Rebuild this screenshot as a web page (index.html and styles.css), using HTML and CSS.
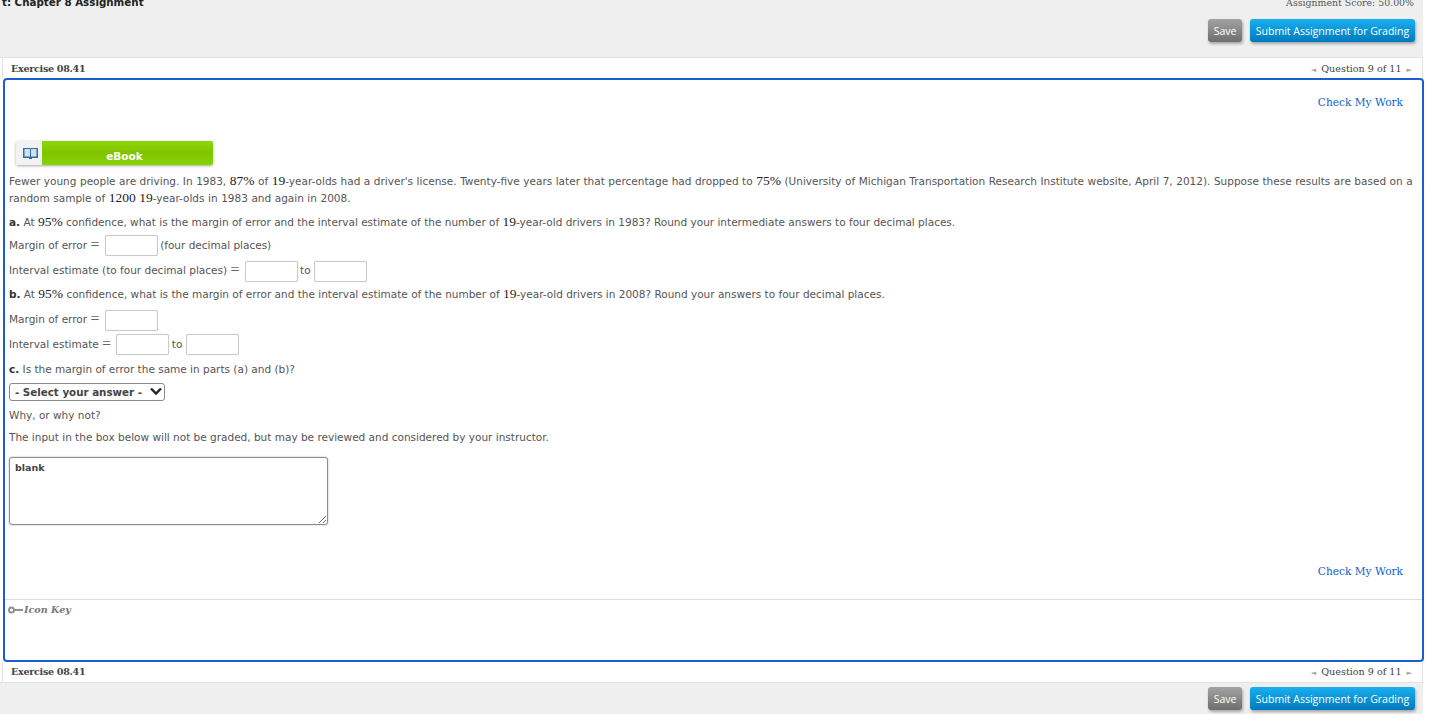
FILE: index.html
```html
<!DOCTYPE html>
<html lang="en">
<head>
    <meta charset="UTF-8">
    <title>Chapter 8 Assignment</title>
    <link rel="stylesheet" href="styles.css">
</head>
<body>
    <div class="top-bar">
        <div class="top-info">
            <span class="assignment-title">t: Chapter 8 Assignment</span>
            <span class="assignment-score">Assignment Score: 50.00%</span>
        </div>
        <div class="actions">
            <button class="btn btn-save">Save</button>
            <button class="btn btn-submit">Submit Assignment for Grading</button>
        </div>
    </div>

    <div class="exercise-bar">
        <span class="exercise-name">Exercise 08.41</span>
        <span class="pager"><span class="arrow">&#9668;</span> Question 9 of 11 <span class="arrow">&#9658;</span></span>
    </div>

    <div class="panel">
        <div class="check-row check-row-top"><a class="check-link">Check My Work</a></div>

        <div class="ebook">
            <span class="ebook-icon">
                <svg width="15" height="13" viewBox="0 0 15 13">
                    <path d="M0 1h7l.5.500L8 1h7v10H9v1H6v-1H0z" fill="#2f6fa5"/>
                    <path d="M1.500 2H7v7.500H1.500zM8 2h5.500v7.500H8z" fill="#cfe0ee"/>
                </svg>
            </span>
            <span class="ebook-label">eBook</span>
        </div>

        <div class="question">
            <p class="intro">Fewer young people are driving. In 1983, <span class="math">87%</span> of <span class="math">19</span>-year-olds had a driver's license. Twenty-five years later that percentage had dropped to <span class="math">75%</span> (University of Michigan Transportation Research Institute website, April 7, 2012). Suppose these results are based on a<br>random sample of <span class="math">1200</span> <span class="math">19</span>-year-olds in 1983 and again in 2008.</p>
            <p class="line line-a"><b>a.</b> At <span class="math">95%</span> confidence, what is the margin of error and the interval estimate of the number of <span class="math">19</span>-year-old drivers in 1983? Round your intermediate answers to four decimal places.</p>
            <p class="line line-tall">Margin of error <span class="eq">=</span> <input class="answer" type="text"> (four decimal places)</p>
            <p class="line line-short">Interval estimate (to four decimal places) <span class="eq">=</span> <input class="answer" type="text"> to <input class="answer" type="text"></p>
            <p class="line line-tall"><b>b.</b> At <span class="math">95%</span> confidence, what is the margin of error and the interval estimate of the number of <span class="math">19</span>-year-old drivers in 2008? Round your answers to four decimal places.</p>
            <p class="line">Margin of error <span class="eq">=</span> <input class="answer" type="text"></p>
            <p class="line line-tall">Interval estimate <span class="eq">=</span> <input class="answer" type="text"> to <input class="answer" type="text"></p>
            <p class="line line-tall"><b>c.</b> Is the margin of error the same in parts (a) and (b)?</p>
            <div class="select-box">
                <span>- Select your answer -</span>
                <svg width="14" height="9" viewBox="0 0 14 9"><path d="M2 1.500 7 6.500l5-5" fill="none" stroke="#222" stroke-width="2.400"/></svg>
            </div>
            <p class="line line-why">Why, or why not?</p>
            <p class="line line-note">The input in the box below will not be graded, but may be reviewed and considered by your instructor.</p>
            <textarea class="comment">blank</textarea>
        </div>

        <div class="check-row check-row-bottom"><a class="check-link">Check My Work</a></div>

        <div class="icon-key">
            <svg width="16" height="8" viewBox="0 0 16 8"><circle cx="3.500" cy="4" r="2.500" fill="none" stroke="#8f8f8f" stroke-width="2"/><path d="M6 4h9" stroke="#8f8f8f" stroke-width="2"/></svg>
            <span>Icon Key</span>
        </div>
    </div>

    <div class="exercise-bar exercise-bar-bottom">
        <span class="exercise-name">Exercise 08.41</span>
        <span class="pager"><span class="arrow">&#9668;</span> Question 9 of 11 <span class="arrow">&#9658;</span></span>
    </div>

    <div class="bottom-bar">
        <div class="actions">
            <button class="btn btn-save">Save</button>
            <button class="btn btn-submit">Submit Assignment for Grading</button>
        </div>
    </div>
</body>
</html>
```

FILE: styles.css
```css
html, body {
    height: 714px;
    overflow: hidden;
}

body {
    margin: 0;
    background-color: #fff;
    font-family: "DejaVu Sans", Verdana, sans-serif;
    font-size: 10.500px;
    color: #555;
}

.top-bar {
    width: 1423px;
    height: 58px;
    box-sizing: border-box;
    background-color: #efefef;
    border-bottom: 1px solid #e2e2e2;
    overflow: hidden;
}

.top-info {
    display: flex;
    justify-content: space-between;
    height: 14px;
    margin-top: -5px;
    margin-bottom: 10px;
    padding-right: 9px;
}

.assignment-title {
    margin-left: 2px;
    font-weight: bold;
    font-size: 10.300px;
    color: #222;
    line-height: 14px;
}

.assignment-score {
    margin-top: 1px;
    font-family: "DejaVu Serif", serif;
    font-size: 9.400px;
    line-height: 14px;
}

.actions {
    display: flex;
    justify-content: flex-end;
    gap: 8px;
    padding-right: 8px;
}

.btn {
    height: 23px;
    border: none;
    border-radius: 3px;
    color: #fff;
    font-family: "Open Sans", sans-serif;
    font-size: 10.500px;
    font-weight: 500;
    padding: 0;
    box-shadow: 1px 2px 3px rgba(0, 0, 0, 0.3);
}

.btn-save {
    width: 34px;
    background: linear-gradient(#a3a3a3, #6e6e6e);
}

.btn-submit {
    width: 165px;
    background: linear-gradient(#19b0f0, #0079bd);
}

.exercise-bar {
    display: flex;
    justify-content: space-between;
    align-items: center;
    width: 1421px;
    height: 20px;
    margin-left: 2px;
    box-sizing: border-box;
    padding: 0 8px 0 8px;
    border-left: 1px solid #e2e2e2;
    border-right: 1px solid #e2e2e2;
    font-family: "DejaVu Serif", serif;
    font-size: 9.600px;
    color: #444;
    background-color: #fff;
}

.exercise-bar-bottom {
    padding-bottom: 2px;
}

.exercise-name {
    font-weight: bold;
    letter-spacing: -0.300px;
}

.pager .arrow {
    font-size: 7px;
    color: #aaa;
    margin: 0 2px;
}

.panel {
    width: 1421px;
    height: 584px;
    margin-left: 3px;
    box-sizing: border-box;
    border: 2px solid #1a5fd0;
    border-radius: 4px;
    background-color: #fff;
}

.check-row {
    display: flex;
    justify-content: flex-end;
    padding-right: 19px;
}

.check-row-top {
    padding-top: 14px;
}

.check-row-bottom {
    margin-top: 38px;
}

.check-link {
    font-family: "DejaVu Serif", serif;
    font-size: 10.600px;
    line-height: 16px;
    color: #0f62c9;
}

.ebook {
    display: flex;
    width: 197px;
    height: 24px;
    margin: 31px 0 0 11px;
    box-shadow: 0 1px 3px rgba(0, 0, 0, 0.35);
    border-radius: 2px;
}

.ebook-icon {
    display: flex;
    align-items: center;
    justify-content: center;
    width: 26px;
    padding-left: 3px;
    box-sizing: border-box;
    background-color: #f2f2f2;
}

.ebook-label {
    flex: 1;
    padding-right: 6px;
    background: linear-gradient(#8fd606, #7fc400 50%, #8ad200);
    border-radius: 0 2px 2px 0;
    color: #fff;
    font-weight: bold;
    font-size: 10.500px;
    line-height: 31px;
    overflow: hidden;
    text-align: center;
}

.question {
    padding: 0 4px;
}

.question p {
    margin: 0;
}

.intro {
    margin-top: 8px !important;
    line-height: 17px;
    word-spacing: 0.200px;
}

.line {
    height: 24.500px;
    line-height: 24.500px;
    white-space: nowrap;
}

.line b {
    color: #333;
}

.line-a {
    height: 22.500px;
    margin-top: 3px !important;
}

.line-tall {
    height: 25.500px;
}

.line-short {
    height: 23.500px;
}

.line-why {
    height: 22px;
    margin-top: 3px !important;
    line-height: 23px;
}

.line-note {
    height: 22px;
    line-height: 22px;
}

.math {
    font-family: "Liberation Serif", serif;
    font-size: 13.500px;
    line-height: 1;
    color: #222;
}

.eq {
    margin-right: 2px;
    font-family: "Liberation Serif", serif;
    font-size: 16px;
    line-height: 1;
    vertical-align: -1px;
    color: #666;
}

.answer {
    width: 53px;
    height: 21px;
    box-sizing: border-box;
    margin: 0 -1px 0 0;
    padding: 0;
    vertical-align: middle;
    border: 1px solid #c9c9c9;
    border-radius: 2px;
    background-color: #fff;
    box-shadow: 0 0 1px rgba(0, 0, 0, 0.15);
}

.select-box {
    display: flex;
    align-items: center;
    justify-content: space-between;
    width: 156px;
    height: 18px;
    box-sizing: border-box;
    padding: 0 1px 0 5px;
    border: 1px solid #8a8a8a;
    border-radius: 3px;
    font-weight: bold;
    font-size: 10.300px;
    color: #444;
}

.comment {
    display: block;
    width: 319px;
    height: 68px;
    box-sizing: border-box;
    margin-top: 9px;
    padding: 4px 5px;
    border: 1px solid #8c8c8c;
    border-radius: 3px;
    font-family: "DejaVu Sans", Verdana, sans-serif;
    font-size: 9.500px;
    font-weight: bold;
    color: #444;
    box-shadow: 0 0 2px rgba(0, 0, 0, 0.3);
}

.icon-key {
    display: flex;
    align-items: center;
    margin-top: 20px;
    height: 20px;
    padding-left: 3px;
    border-top: 1px solid #ddd;
    font-family: "DejaVu Serif", serif;
    font-style: italic;
    font-weight: bold;
    font-size: 9.600px;
    color: #777;
}

.bottom-bar {
    width: 1423px;
    height: 32px;
    box-sizing: border-box;
    padding-top: 4px;
    background-color: #efefef;
    border-top: 1px solid #e2e2e2;
}
```
